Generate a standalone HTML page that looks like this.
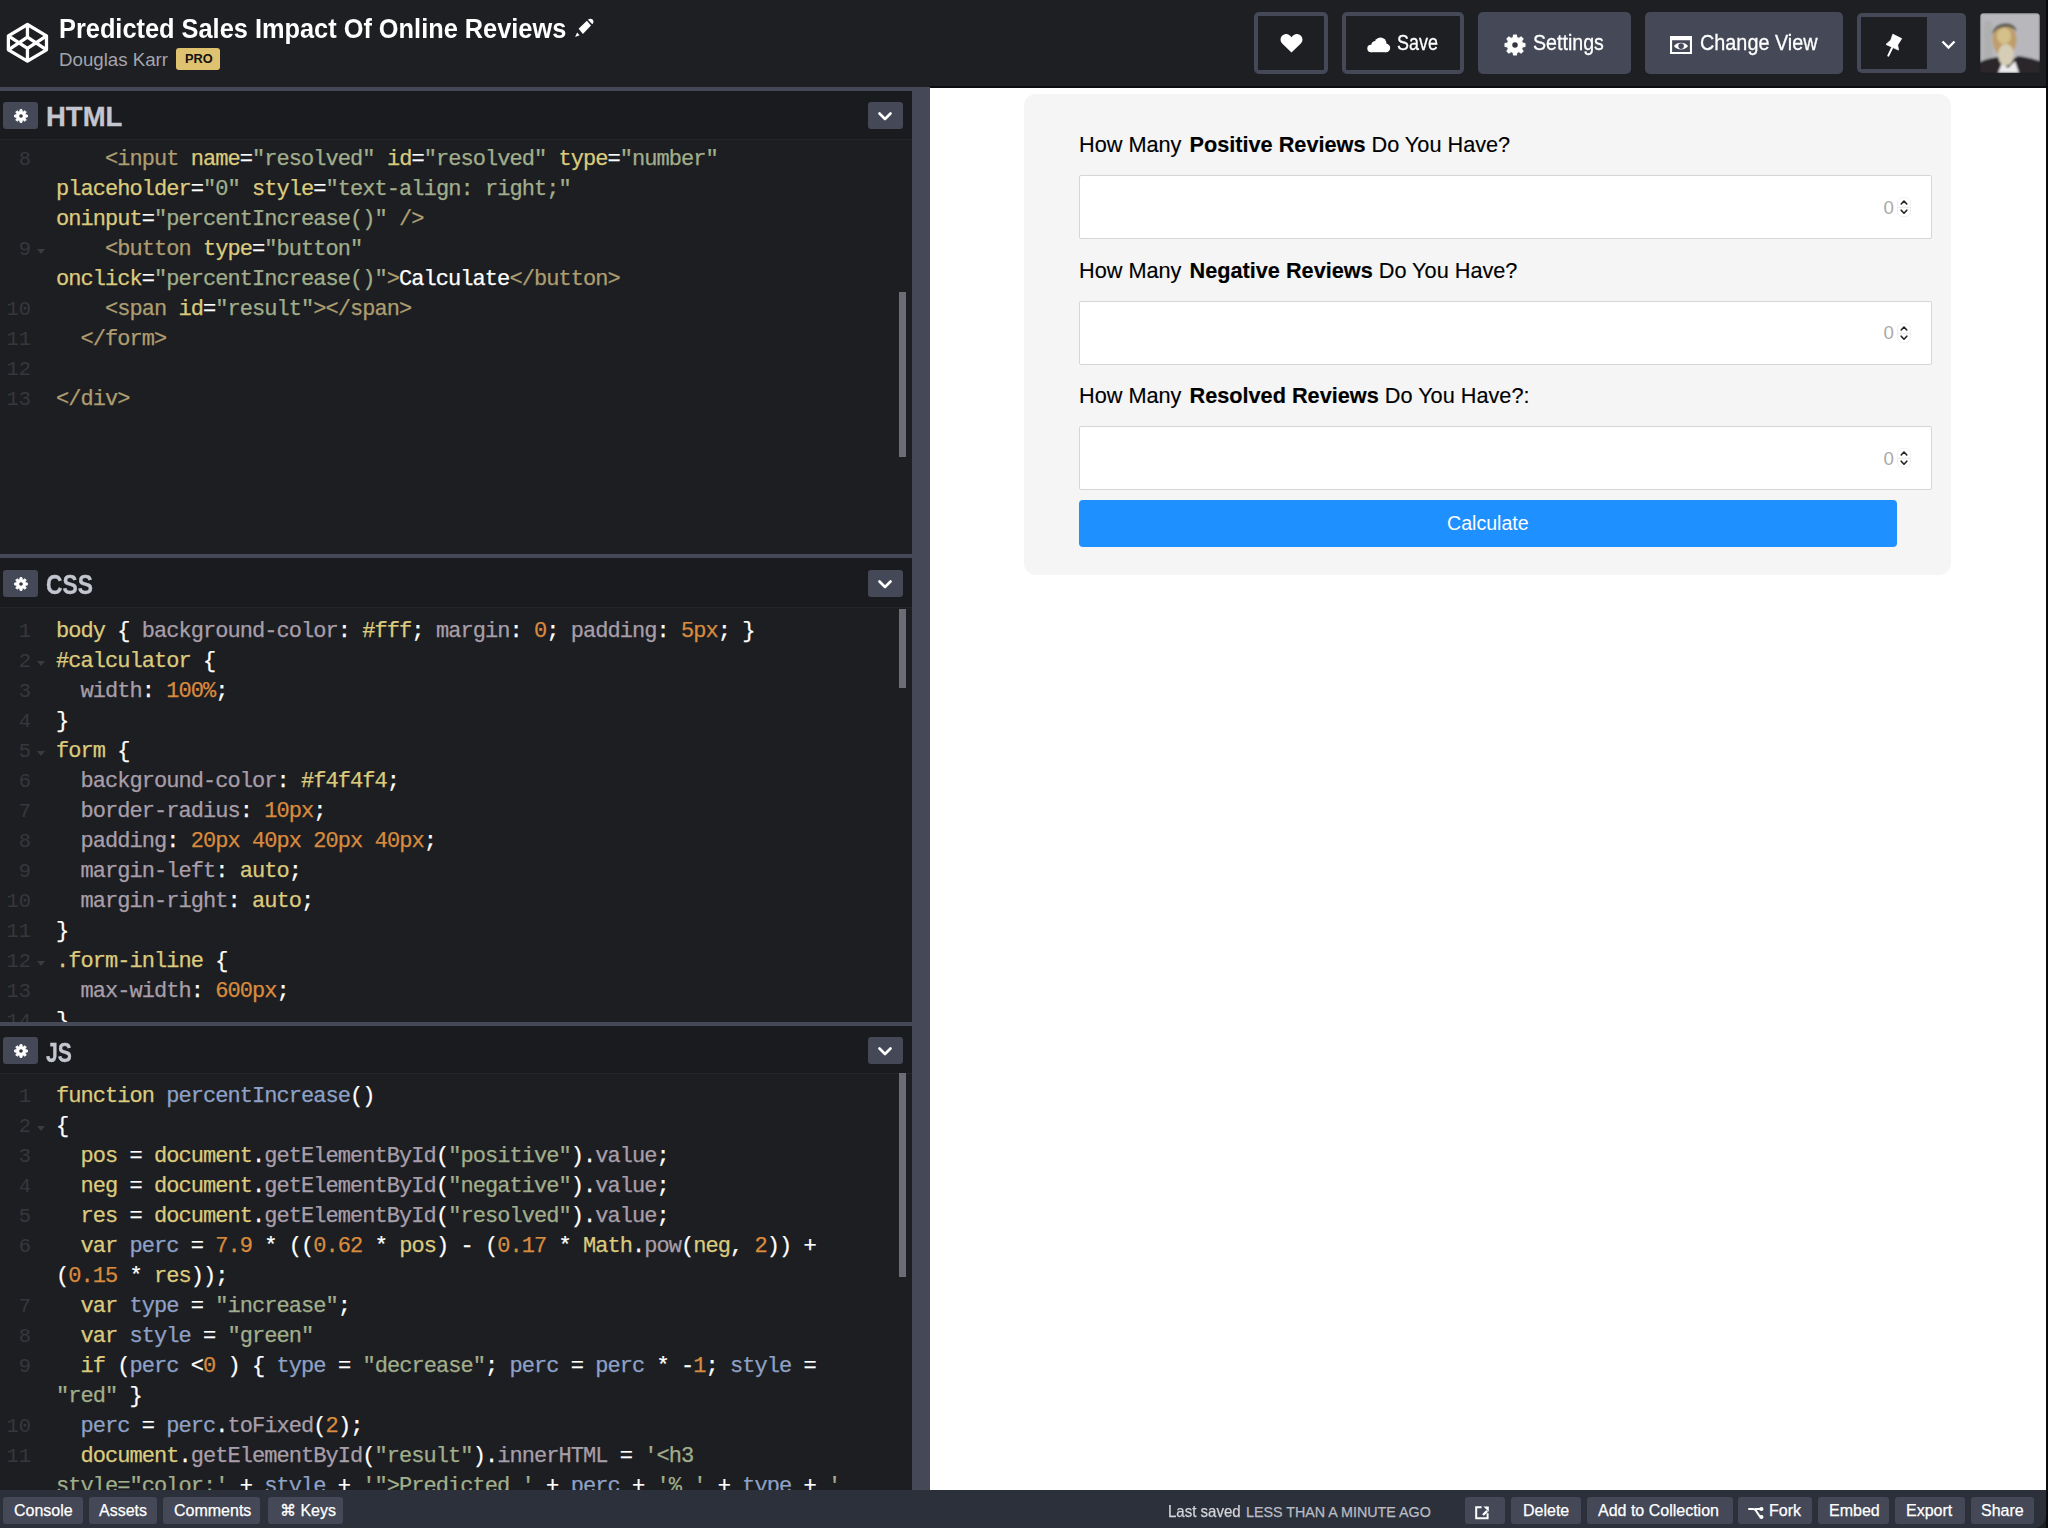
<!DOCTYPE html>
<html><head><meta charset="utf-8">
<style>
*{box-sizing:border-box;margin:0;padding:0}
html,body{width:2048px;height:1528px;overflow:hidden;background:#1e1f23;font-family:"Liberation Sans",sans-serif}
.a{position:absolute;white-space:nowrap;line-height:1}
#hdr{position:absolute;left:0;top:0;width:2048px;height:87px;background:#1e1f23}
.hbtn{position:absolute;top:12px;height:62px;border-radius:5px}
.hb-dark{background:#1e1f23;border:4px solid #444857}
.hb-gray{background:#444857}
.htxt{position:absolute;color:#fff;font-size:22.5px;line-height:1;white-space:nowrap;-webkit-text-stroke:0.3px #fff}
#editor{position:absolute;left:0;top:87px;width:912px;height:1403px;background:#1d1e22}
#gutterR{position:absolute;left:912px;top:87px;width:18px;height:1403px;background:#444857}
#preview{position:absolute;left:930px;top:87px;width:1116px;height:1403px;background:#fff}
.pborder{position:absolute;left:0;width:912px;height:4px;background:#444857}
.phead{position:absolute;left:0;width:912px;background:#1a1b1f;border-bottom:1px solid #25262c}
.gearbtn{position:absolute;left:3px;width:35px;height:27px;background:#444857;border-radius:3px}
.pname{position:absolute;left:46px;color:#c4c6cf;font-weight:bold;font-size:27.5px;line-height:1;-webkit-text-stroke:0.3px currentColor}
.chev{position:absolute;left:868px;width:35px;height:27px;background:#444857;border-radius:3px}
.codearea{position:absolute;left:0;width:912px;overflow:hidden;background:#1d1e22}
.cl{position:absolute;left:56px;font-family:"Liberation Mono",monospace;font-size:22px;letter-spacing:-0.95px;line-height:30px;white-space:pre;color:#fff;-webkit-text-stroke:0.25px currentColor}
.ln{position:absolute;left:0;width:31px;text-align:right;font-family:"Liberation Mono",monospace;font-size:20.4px;line-height:30px;color:#36373c}
.fold{position:absolute;left:37px;width:0;height:0;border-left:4px solid transparent;border-right:4px solid transparent;border-top:5px solid #3a3b40}
.scroll{position:absolute;left:899px;width:7px;background:#6c6c76}
#footer{position:absolute;left:0;top:1490px;width:2046px;height:38px;background:#2c303a;border-bottom-right-radius:12px}
.fbtn{position:absolute;top:1497px;height:27px;background:#444857;border-radius:3px}
.ftxt{position:absolute;color:#fff;font-size:16px;line-height:1;white-space:nowrap;-webkit-text-stroke:0.25px currentColor}
/* preview */
#form{position:absolute;left:1024px;top:94px;width:927px;height:481px;background:#f5f5f5;border-radius:12px}
.lbl{position:absolute;left:1079px;color:#000;font-size:21.7px;line-height:1;white-space:nowrap;-webkit-text-stroke:0.15px #000}
.lbl b{margin-left:2px}
.inp{position:absolute;left:1079px;width:853px;height:64px;background:#fff;border:1.5px solid #d6d6d6;border-radius:2px}
.ph{position:absolute;color:#b0b0b0;font-size:20px;line-height:1}
#calc{position:absolute;left:1079px;top:500px;width:818px;height:46.5px;background:#1e90ff;border-radius:4px}
</style></head>
<body>
<div id="hdr"></div>
<!-- logo -->
<svg class="a" style="left:5px;top:21px" width="44" height="44" viewBox="0 0 44 44"><path fill="none" stroke="#fff" stroke-width="3.3" stroke-linejoin="round" d="M22.45 3.5 L41.5 14.8 V28.8 L22.45 40.1 L3.4 28.8 V14.8 Z M22.45 3.5 V16.2 M3.4 28.8 L22.45 16.2 L41.5 28.8 M3.4 14.8 L22.45 27.4 L41.5 14.8 M22.45 27.4 V40.1"/></svg>
<div class="a" style="left:59px;top:15.4px;color:#fff;font-weight:bold;font-size:27.5px" id="title"><span style="display:inline-block;transform:scaleX(0.922);transform-origin:0 0">Predicted Sales Impact Of Online Reviews</span></div>
<svg class="a" style="left:572px;top:16px" width="24" height="24" viewBox="0 0 24 24"><path fill="#fff" d="M3.1 20.9 L5.1 16.5 L7.6 19.2 Z M6.6 12.8 L14.9 4.7 L19 9.6 L10.9 17.9 Z M15.9 3.7 C17.4 2.3 19.4 2.4 20.6 3.6 C21.8 4.8 21.9 6.7 20.3 8.3 Z"/></svg>
<div class="a" style="left:59px;top:50.7px;color:#a3a5ad;font-size:18.7px" id="author">Douglas Karr</div>
<div class="a" style="left:176px;top:48px;width:44px;height:22px;background:#dfc26f;border-radius:3px"></div>
<div class="a" style="left:185px;top:53.2px;color:#111;font-weight:bold;font-size:12.8px" id="pro">PRO</div>

<div class="hbtn hb-dark" style="left:1254px;width:74px"></div>
<svg class="a" style="left:1280px;top:33px" width="23" height="20" viewBox="0 0 24 21"><path fill="#fff" d="M12 20.5 L2.2 11 C-0.8 8 0.2 2.2 5 1.2 C8 0.6 10.5 2.2 12 4.5 C13.5 2.2 16 0.6 19 1.2 C23.8 2.2 24.8 8 21.8 11 Z"/></svg>
<div class="hbtn hb-dark" style="left:1342px;width:122px"></div>
<svg class="a" style="left:1366px;top:36px" width="25" height="17" viewBox="0 0 25 17"><g fill="#fff"><circle cx="5" cy="12.5" r="3.7"/><circle cx="9.5" cy="9.2" r="4.2"/><circle cx="14.5" cy="7.4" r="6"/><circle cx="20" cy="12" r="4.2"/><rect x="5" y="10" width="15" height="6.2"/></g></svg>
<div class="htxt" id="save" style="transform:scaleX(0.797);transform-origin:0 0;left:1397px;top:32px">Save</div>
<div class="hbtn hb-gray" style="left:1478px;width:153px"></div>
<svg class="a" style="left:1503.5px;top:34px" width="22" height="22" viewBox="0 0 24 24"><path fill="#fff" stroke="#fff" stroke-width="1.2" stroke-linejoin="round" d="M9.97 3.85 L10.39 1.12 L13.61 1.12 L14.03 3.85 L16.33 4.80 L18.55 3.16 L20.84 5.45 L19.20 7.67 L20.15 9.97 L22.88 10.39 L22.88 13.61 L20.15 14.03 L19.20 16.33 L20.84 18.55 L18.55 20.84 L16.33 19.20 L14.03 20.15 L13.61 22.88 L10.39 22.88 L9.97 20.15 L7.67 19.20 L5.45 20.84 L3.16 18.55 L4.80 16.33 L3.85 14.03 L1.12 13.61 L1.12 10.39 L3.85 9.97 L4.80 7.67 L3.16 5.45 L5.45 3.16 L7.67 4.80 Z"/><circle cx="12" cy="12" r="3" fill="#35363d"/></svg>
<div class="htxt" id="settings" style="transform:scaleX(0.872);transform-origin:0 0;left:1533px;top:32px">Settings</div>
<div class="hbtn hb-gray" style="left:1645px;width:198px"></div>
<svg class="a" style="left:1670px;top:36px" width="22" height="18" viewBox="0 0 22 18"><path fill="#fff" fill-rule="evenodd" d="M0 0 H22 V18 H0 Z M2.1 4.2 V16 H19.9 V4.2 Z"/><path fill="#fff" d="M3.9 10.05 C6.8 5.6 15.2 5.6 18.1 10.05 C15.2 14.5 6.8 14.5 3.9 10.05 Z"/><circle cx="11.1" cy="10.1" r="2.8" fill="#444857"/></svg>
<div class="htxt" id="cview" style="transform:scaleX(0.881);transform-origin:0 0;left:1700px;top:32px">Change View</div>
<div class="hbtn hb-gray" style="left:1857px;top:13px;width:109px;height:60px"></div>
<div class="a" style="left:1861px;top:17px;width:66px;height:52px;background:#1e1f23"></div>
<svg class="a" style="left:1884px;top:32px" width="20" height="26" viewBox="0 0 20 26"><path fill="#fff" stroke="#fff" stroke-width="0.8" stroke-linejoin="round" d="M8.8 2.2 L17.7 6.6 L13.7 12.9 L14.5 18.1 L2 12.4 L6.9 7.9 Z"/><path fill="none" stroke="#fff" stroke-width="2" stroke-linecap="round" d="M8 16 L4.3 23.6"/></svg>
<svg class="a" style="left:1941px;top:40px" width="15" height="10" viewBox="0 0 15 10"><path fill="none" stroke="#fff" stroke-width="2.4" d="M1.5 1.5 L7.5 7.5 L13.5 1.5"/></svg>
<svg class="a" id="avatar" style="left:1980px;top:13px" width="60" height="60" viewBox="0 0 60 60"><defs><clipPath id="avc"><rect width="60" height="60" rx="4"/></clipPath><filter id="avb" x="-10%" y="-10%" width="120%" height="120%"><feGaussianBlur stdDeviation="0.9"/></filter></defs><g clip-path="url(#avc)"><g filter="url(#avb)"><rect width="60" height="60" fill="#b8b7bc"/><rect x="4" y="8" width="8" height="40" fill="#a3a9a4" opacity="0.5"/><path d="M0 60 V49 C6 46 12 45 18 44 L30 48 L38 43 C46 44 54 46 60 48 V60 Z" fill="#29282c"/><path d="M18 60 L22 50 L28 55 L35 48 L39 60 Z" fill="#ecebec"/><ellipse cx="24.5" cy="27" rx="12" ry="16" fill="#c09e6c"/><ellipse cx="24" cy="23" rx="7" ry="8" fill="#d4c08a"/><ellipse cx="26" cy="42" rx="8" ry="11" fill="#d5cdb6"/><path d="M12.5 22 C11 8 37 6 36.5 19 C33 12 16 12 12.5 22 Z" fill="#5f5e56"/></g></g></svg>
<div class="a" style="left:2046px;top:0;width:2px;height:1528px;background:#0b0b0e"></div>

<div id="editor"></div>
<div id="gutterR"></div>
<div id="preview"></div>
<div class="a" style="left:930px;top:86px;width:1116px;height:1.5px;background:#0d0d11"></div>

<!-- HTML panel -->
<div class="pborder" style="top:87px"></div>
<div class="phead" style="top:91px;height:48.5px"></div>
<div class="gearbtn" style="top:102px"></div><svg class="a" style="left:13.5px;top:108.5px" width="14" height="14" viewBox="0 0 14 14"><path fill="#fff" stroke="#fff" stroke-width="0.8" stroke-linejoin="round" d="M5.79 2.15 L6.03 0.47 L7.97 0.47 L8.21 2.15 L9.58 2.72 L10.93 1.70 L12.30 3.07 L11.28 4.42 L11.85 5.79 L13.53 6.03 L13.53 7.97 L11.85 8.21 L11.28 9.58 L12.30 10.93 L10.93 12.30 L9.58 11.28 L8.21 11.85 L7.97 13.53 L6.03 13.53 L5.79 11.85 L4.42 11.28 L3.07 12.30 L1.70 10.93 L2.72 9.58 L2.15 8.21 L0.47 7.97 L0.47 6.03 L2.15 5.79 L2.72 4.42 L1.70 3.07 L3.07 1.70 L4.42 2.72 Z"/><circle cx="7" cy="7" r="1.8" fill="#35363d"/></svg>
<div class="pname" style="top:103.4px">HTML</div>
<div class="chev" style="top:102px"></div><svg class="a" style="left:878px;top:111.5px" width="14" height="9" viewBox="0 0 14 9"><path fill="none" stroke="#fff" stroke-width="2.6" stroke-linecap="round" stroke-linejoin="round" d="M1.5 1.5 L7 7 L12.5 1.5"/></svg>
<div class="codearea" style="top:139.5px;height:414.5px">
<div class="ln" style="top:5.1px">8</div>
<div class="cl" style="top:5.1px">    <span style="color:#ad9d70">&lt;input</span> <span style="color:#dccb7d">name</span>=<span style="color:#a1ae8c">&quot;resolved&quot;</span> <span style="color:#dccb7d">id</span>=<span style="color:#a1ae8c">&quot;resolved&quot;</span> <span style="color:#dccb7d">type</span>=<span style="color:#a1ae8c">&quot;number&quot;</span></div>
<div class="cl" style="top:35.1px"><span style="color:#dccb7d">placeholder</span>=<span style="color:#a1ae8c">&quot;0&quot;</span> <span style="color:#dccb7d">style</span>=<span style="color:#a1ae8c">&quot;text-align: right;&quot;</span></div>
<div class="cl" style="top:65.1px"><span style="color:#dccb7d">oninput</span>=<span style="color:#a1ae8c">&quot;percentIncrease()&quot;</span> <span style="color:#ad9d70">/&gt;</span></div>
<div class="ln" style="top:95.1px">9</div>
<div class="fold" style="top:109.1px"></div>
<div class="cl" style="top:95.1px">    <span style="color:#ad9d70">&lt;button</span> <span style="color:#dccb7d">type</span>=<span style="color:#a1ae8c">&quot;button&quot;</span></div>
<div class="cl" style="top:125.1px"><span style="color:#dccb7d">onclick</span>=<span style="color:#a1ae8c">&quot;percentIncrease()&quot;</span><span style="color:#ad9d70">&gt;</span>Calculate<span style="color:#ad9d70">&lt;/button&gt;</span></div>
<div class="ln" style="top:155.1px">10</div>
<div class="cl" style="top:155.1px">    <span style="color:#ad9d70">&lt;span</span> <span style="color:#dccb7d">id</span>=<span style="color:#a1ae8c">&quot;result&quot;</span><span style="color:#ad9d70">&gt;&lt;/span&gt;</span></div>
<div class="ln" style="top:185.1px">11</div>
<div class="cl" style="top:185.1px">  <span style="color:#ad9d70">&lt;/form&gt;</span></div>
<div class="ln" style="top:215.1px">12</div>
<div class="cl" style="top:215.1px"></div>
<div class="ln" style="top:245.1px">13</div>
<div class="cl" style="top:245.1px"><span style="color:#ad9d70">&lt;/div&gt;</span></div>
</div>
<div class="scroll" style="top:292px;height:165px"></div>

<!-- CSS panel -->
<div class="pborder" style="top:554px"></div>
<div class="phead" style="top:558px;height:50px"></div>
<div class="gearbtn" style="top:570px"></div><svg class="a" style="left:13.5px;top:576.5px" width="14" height="14" viewBox="0 0 14 14"><path fill="#fff" stroke="#fff" stroke-width="0.8" stroke-linejoin="round" d="M5.79 2.15 L6.03 0.47 L7.97 0.47 L8.21 2.15 L9.58 2.72 L10.93 1.70 L12.30 3.07 L11.28 4.42 L11.85 5.79 L13.53 6.03 L13.53 7.97 L11.85 8.21 L11.28 9.58 L12.30 10.93 L10.93 12.30 L9.58 11.28 L8.21 11.85 L7.97 13.53 L6.03 13.53 L5.79 11.85 L4.42 11.28 L3.07 12.30 L1.70 10.93 L2.72 9.58 L2.15 8.21 L0.47 7.97 L0.47 6.03 L2.15 5.79 L2.72 4.42 L1.70 3.07 L3.07 1.70 L4.42 2.72 Z"/><circle cx="7" cy="7" r="1.8" fill="#35363d"/></svg>
<div class="pname" style="top:571.4px;transform:scaleX(0.83);transform-origin:0 0">CSS</div>
<div class="chev" style="top:570px"></div><svg class="a" style="left:878px;top:579.5px" width="14" height="9" viewBox="0 0 14 9"><path fill="none" stroke="#fff" stroke-width="2.6" stroke-linecap="round" stroke-linejoin="round" d="M1.5 1.5 L7 7 L12.5 1.5"/></svg>
<div class="codearea" style="top:608px;height:414px">
<div class="ln" style="top:8.5px">1</div>
<div class="cl" style="top:8.5px"><span style="color:#dccb7d">body</span> { <span style="color:#a89eaa">background-color</span>: <span style="color:#dccb7d">#fff</span>; <span style="color:#a89eaa">margin</span>: <span style="color:#d98b3e">0</span>; <span style="color:#a89eaa">padding</span>: <span style="color:#d98b3e">5px</span>; }</div>
<div class="ln" style="top:38.5px">2</div>
<div class="fold" style="top:52.5px"></div>
<div class="cl" style="top:38.5px"><span style="color:#dccb7d">#calculator</span> {</div>
<div class="ln" style="top:68.5px">3</div>
<div class="cl" style="top:68.5px">  <span style="color:#a89eaa">width</span>: <span style="color:#d98b3e">100%</span>;</div>
<div class="ln" style="top:98.5px">4</div>
<div class="cl" style="top:98.5px">}</div>
<div class="ln" style="top:128.5px">5</div>
<div class="fold" style="top:142.5px"></div>
<div class="cl" style="top:128.5px"><span style="color:#dccb7d">form</span> {</div>
<div class="ln" style="top:158.5px">6</div>
<div class="cl" style="top:158.5px">  <span style="color:#a89eaa">background-color</span>: <span style="color:#dccb7d">#f4f4f4</span>;</div>
<div class="ln" style="top:188.5px">7</div>
<div class="cl" style="top:188.5px">  <span style="color:#a89eaa">border-radius</span>: <span style="color:#d98b3e">10px</span>;</div>
<div class="ln" style="top:218.5px">8</div>
<div class="cl" style="top:218.5px">  <span style="color:#a89eaa">padding</span>: <span style="color:#d98b3e">20px</span> <span style="color:#d98b3e">40px</span> <span style="color:#d98b3e">20px</span> <span style="color:#d98b3e">40px</span>;</div>
<div class="ln" style="top:248.5px">9</div>
<div class="cl" style="top:248.5px">  <span style="color:#a89eaa">margin-left</span>: <span style="color:#dccb7d">auto</span>;</div>
<div class="ln" style="top:278.5px">10</div>
<div class="cl" style="top:278.5px">  <span style="color:#a89eaa">margin-right</span>: <span style="color:#dccb7d">auto</span>;</div>
<div class="ln" style="top:308.5px">11</div>
<div class="cl" style="top:308.5px">}</div>
<div class="ln" style="top:338.5px">12</div>
<div class="fold" style="top:352.5px"></div>
<div class="cl" style="top:338.5px"><span style="color:#dccb7d">.form-inline</span> {</div>
<div class="ln" style="top:368.5px">13</div>
<div class="cl" style="top:368.5px">  <span style="color:#a89eaa">max-width</span>: <span style="color:#d98b3e">600px</span>;</div>
<div class="ln" style="top:398.5px">14</div>
<div class="cl" style="top:398.5px">}</div>
</div>
<div class="scroll" style="top:609px;height:79px"></div>

<!-- JS panel -->
<div class="pborder" style="top:1022px"></div>
<div class="phead" style="top:1026px;height:48px"></div>
<div class="gearbtn" style="top:1037px"></div><svg class="a" style="left:13.5px;top:1043.5px" width="14" height="14" viewBox="0 0 14 14"><path fill="#fff" stroke="#fff" stroke-width="0.8" stroke-linejoin="round" d="M5.79 2.15 L6.03 0.47 L7.97 0.47 L8.21 2.15 L9.58 2.72 L10.93 1.70 L12.30 3.07 L11.28 4.42 L11.85 5.79 L13.53 6.03 L13.53 7.97 L11.85 8.21 L11.28 9.58 L12.30 10.93 L10.93 12.30 L9.58 11.28 L8.21 11.85 L7.97 13.53 L6.03 13.53 L5.79 11.85 L4.42 11.28 L3.07 12.30 L1.70 10.93 L2.72 9.58 L2.15 8.21 L0.47 7.97 L0.47 6.03 L2.15 5.79 L2.72 4.42 L1.70 3.07 L3.07 1.70 L4.42 2.72 Z"/><circle cx="7" cy="7" r="1.8" fill="#35363d"/></svg>
<div class="pname" style="top:1038.6px;transform:scaleX(0.77);transform-origin:0 0">JS</div>
<div class="chev" style="top:1037px"></div><svg class="a" style="left:878px;top:1046.5px" width="14" height="9" viewBox="0 0 14 9"><path fill="none" stroke="#fff" stroke-width="2.6" stroke-linecap="round" stroke-linejoin="round" d="M1.5 1.5 L7 7 L12.5 1.5"/></svg>
<div class="codearea" style="top:1074px;height:416px">
<div class="ln" style="top:7.6px">1</div>
<div class="cl" style="top:7.6px"><span style="color:#dccb7d">function</span> <span style="color:#8ea1c6">percentIncrease</span>()</div>
<div class="ln" style="top:37.6px">2</div>
<div class="fold" style="top:51.6px"></div>
<div class="cl" style="top:37.6px">{</div>
<div class="ln" style="top:67.6px">3</div>
<div class="cl" style="top:67.6px">  <span style="color:#dccb7d">pos</span> = <span style="color:#dccb7d">document</span>.<span style="color:#a89eaa">getElementById</span>(<span style="color:#a1ae8c">&quot;positive&quot;</span>).<span style="color:#a89eaa">value</span>;</div>
<div class="ln" style="top:97.6px">4</div>
<div class="cl" style="top:97.6px">  <span style="color:#dccb7d">neg</span> = <span style="color:#dccb7d">document</span>.<span style="color:#a89eaa">getElementById</span>(<span style="color:#a1ae8c">&quot;negative&quot;</span>).<span style="color:#a89eaa">value</span>;</div>
<div class="ln" style="top:127.6px">5</div>
<div class="cl" style="top:127.6px">  <span style="color:#dccb7d">res</span> = <span style="color:#dccb7d">document</span>.<span style="color:#a89eaa">getElementById</span>(<span style="color:#a1ae8c">&quot;resolved&quot;</span>).<span style="color:#a89eaa">value</span>;</div>
<div class="ln" style="top:157.6px">6</div>
<div class="cl" style="top:157.6px">  <span style="color:#dccb7d">var</span> <span style="color:#8ea1c6">perc</span> = <span style="color:#d98b3e">7.9</span> * ((<span style="color:#d98b3e">0.62</span> * <span style="color:#dccb7d">pos</span>) - (<span style="color:#d98b3e">0.17</span> * <span style="color:#dccb7d">Math</span>.<span style="color:#a89eaa">pow</span>(<span style="color:#dccb7d">neg</span>, <span style="color:#d98b3e">2</span>)) +</div>
<div class="cl" style="top:187.6px">(<span style="color:#d98b3e">0.15</span> * <span style="color:#dccb7d">res</span>));</div>
<div class="ln" style="top:217.6px">7</div>
<div class="cl" style="top:217.6px">  <span style="color:#dccb7d">var</span> <span style="color:#8ea1c6">type</span> = <span style="color:#a1ae8c">&quot;increase&quot;</span>;</div>
<div class="ln" style="top:247.6px">8</div>
<div class="cl" style="top:247.6px">  <span style="color:#dccb7d">var</span> <span style="color:#8ea1c6">style</span> = <span style="color:#a1ae8c">&quot;green&quot;</span></div>
<div class="ln" style="top:277.6px">9</div>
<div class="cl" style="top:277.6px">  <span style="color:#dccb7d">if</span> (<span style="color:#8ea1c6">perc</span> &lt;<span style="color:#d98b3e">0</span> ) { <span style="color:#8ea1c6">type</span> = <span style="color:#a1ae8c">&quot;decrease&quot;</span>; <span style="color:#8ea1c6">perc</span> = <span style="color:#8ea1c6">perc</span> * -<span style="color:#d98b3e">1</span>; <span style="color:#8ea1c6">style</span> =</div>
<div class="cl" style="top:307.6px"><span style="color:#a1ae8c">&quot;red&quot;</span> }</div>
<div class="ln" style="top:337.6px">10</div>
<div class="cl" style="top:337.6px">  <span style="color:#8ea1c6">perc</span> = <span style="color:#8ea1c6">perc</span>.<span style="color:#a89eaa">toFixed</span>(<span style="color:#d98b3e">2</span>);</div>
<div class="ln" style="top:367.6px">11</div>
<div class="cl" style="top:367.6px">  <span style="color:#dccb7d">document</span>.<span style="color:#a89eaa">getElementById</span>(<span style="color:#a1ae8c">&quot;result&quot;</span>).<span style="color:#a89eaa">innerHTML</span> = <span style="color:#a1ae8c">&#x27;&lt;h3</span></div>
<div class="cl" style="top:397.6px"><span style="color:#a1ae8c">style=&quot;color:&#x27;</span> + <span style="color:#8ea1c6">style</span> + <span style="color:#a1ae8c">&#x27;&quot;&gt;Predicted &#x27;</span> + <span style="color:#8ea1c6">perc</span> + <span style="color:#a1ae8c">&#x27;% &#x27;</span> + <span style="color:#8ea1c6">type</span> + <span style="color:#a1ae8c">&#x27;</span></div>
</div>
<div class="scroll" style="top:1073px;height:204px"></div>

<!-- preview form -->
<div id="form"></div>
<div class="lbl" style="top:134.3px">How Many <b>Positive Reviews</b> Do You Have?</div>
<div class="inp" style="top:175px"></div>
<div class="lbl" style="top:259.8px">How Many <b>Negative Reviews</b> Do You Have?</div>
<div class="inp" style="top:300.5px"></div>
<div class="lbl" style="top:385.3px">How Many <b>Resolved Reviews</b> Do You Have?:</div>
<div class="inp" style="top:426px"></div>
<div class="a" style="left:1883.5px;top:198.57px;color:#a9a9a9;font-size:18.7px">0</div><svg class="a" style="left:1897px;top:197.0px" width="14" height="20" viewBox="0 0 14 20"><rect x="0.5" y="0.5" width="13" height="19" rx="5" fill="none" stroke="#efefef" stroke-width="1"/><path d="M1 10.3 H13" stroke="#e6e6e6" stroke-width="1"/><path d="M4.2 7 L7 4 L9.8 7 M4.2 13.2 L7 16.2 L9.8 13.2" fill="none" stroke="#222" stroke-width="1.6" stroke-linecap="round" stroke-linejoin="round"/></svg>
<div class="a" style="left:1883.5px;top:324.07px;color:#a9a9a9;font-size:18.7px">0</div><svg class="a" style="left:1897px;top:322.5px" width="14" height="20" viewBox="0 0 14 20"><rect x="0.5" y="0.5" width="13" height="19" rx="5" fill="none" stroke="#efefef" stroke-width="1"/><path d="M1 10.3 H13" stroke="#e6e6e6" stroke-width="1"/><path d="M4.2 7 L7 4 L9.8 7 M4.2 13.2 L7 16.2 L9.8 13.2" fill="none" stroke="#222" stroke-width="1.6" stroke-linecap="round" stroke-linejoin="round"/></svg>
<div class="a" style="left:1883.5px;top:449.57px;color:#a9a9a9;font-size:18.7px">0</div><svg class="a" style="left:1897px;top:448.0px" width="14" height="20" viewBox="0 0 14 20"><rect x="0.5" y="0.5" width="13" height="19" rx="5" fill="none" stroke="#efefef" stroke-width="1"/><path d="M1 10.3 H13" stroke="#e6e6e6" stroke-width="1"/><path d="M4.2 7 L7 4 L9.8 7 M4.2 13.2 L7 16.2 L9.8 13.2" fill="none" stroke="#222" stroke-width="1.6" stroke-linecap="round" stroke-linejoin="round"/></svg>
<div id="calc"></div>
<div class="a" style="left:1447px;top:514px;color:#fff;font-size:19.6px">Calculate</div>

<!-- footer -->
<div id="footer"></div>
<div class="fbtn" style="left:3px;width:80px"></div><div class="ftxt" style="left:14px;top:1503.0px">Console</div>
<div class="fbtn" style="left:89px;width:68px"></div><div class="ftxt" style="left:99px;top:1503.0px">Assets</div>
<div class="fbtn" style="left:163px;width:97px"></div><div class="ftxt" style="left:174px;top:1503.0px">Comments</div>
<div class="fbtn" style="left:268px;width:75px"></div><div class="ftxt" style="left:280px;top:1503.0px">&#8984; Keys</div>
<div class="ftxt" style="left:1168px;top:1502.8px;color:#d4d5da;font-size:16.5px;transform:scaleX(0.91);transform-origin:0 0">Last saved</div>
<div class="ftxt" style="left:1246px;top:1504.7px;color:#babcc4;font-size:14.3px">LESS THAN A MINUTE AGO</div>
<div class="fbtn" style="left:1465px;width:40px"></div>
<svg class="a" style="left:1475px;top:1506px" width="14" height="14" viewBox="0 0 14 14"><path fill="none" stroke="#fff" stroke-width="2" d="M6.6 1.2 H1.2 V12.3 H12.6 V7.2"/><path fill="none" stroke="#fff" stroke-width="2.4" d="M8 9 L12.2 4.8"/><path fill="#fff" d="M8.4 0.4 H13.8 V5.8 Z"/></svg>
<div class="fbtn" style="left:1511px;width:70px"></div><div class="ftxt" style="left:1523px;top:1503.0px">Delete</div>
<div class="fbtn" style="left:1587px;width:146px"></div><div class="ftxt" style="left:1598px;top:1503.0px">Add to Collection</div>
<div class="fbtn" style="left:1738px;width:74px"></div>
<svg class="a" style="left:1748px;top:1506.2px" width="16" height="14" viewBox="0 0 16 14"><path fill="none" stroke="#fff" stroke-width="2" stroke-linecap="round" d="M1 3 H5 C6.5 3 7.2 3.6 8 4.8 L11.2 9.6 C11.8 10.6 12.4 11 13.5 11 M7.5 3 H13"/><circle cx="13.4" cy="3" r="2.1" fill="#fff"/><circle cx="13.4" cy="11" r="2.1" fill="#fff"/></svg>
<div class="ftxt" style="left:1769px;top:1503.0px">Fork</div>
<div class="fbtn" style="left:1818px;width:71px"></div><div class="ftxt" style="left:1829px;top:1503.0px">Embed</div>
<div class="fbtn" style="left:1895px;width:70px"></div><div class="ftxt" style="left:1906px;top:1503.0px">Export</div>
<div class="fbtn" style="left:1971px;width:63px"></div><div class="ftxt" style="left:1981px;top:1503.0px">Share</div>
</body></html>
